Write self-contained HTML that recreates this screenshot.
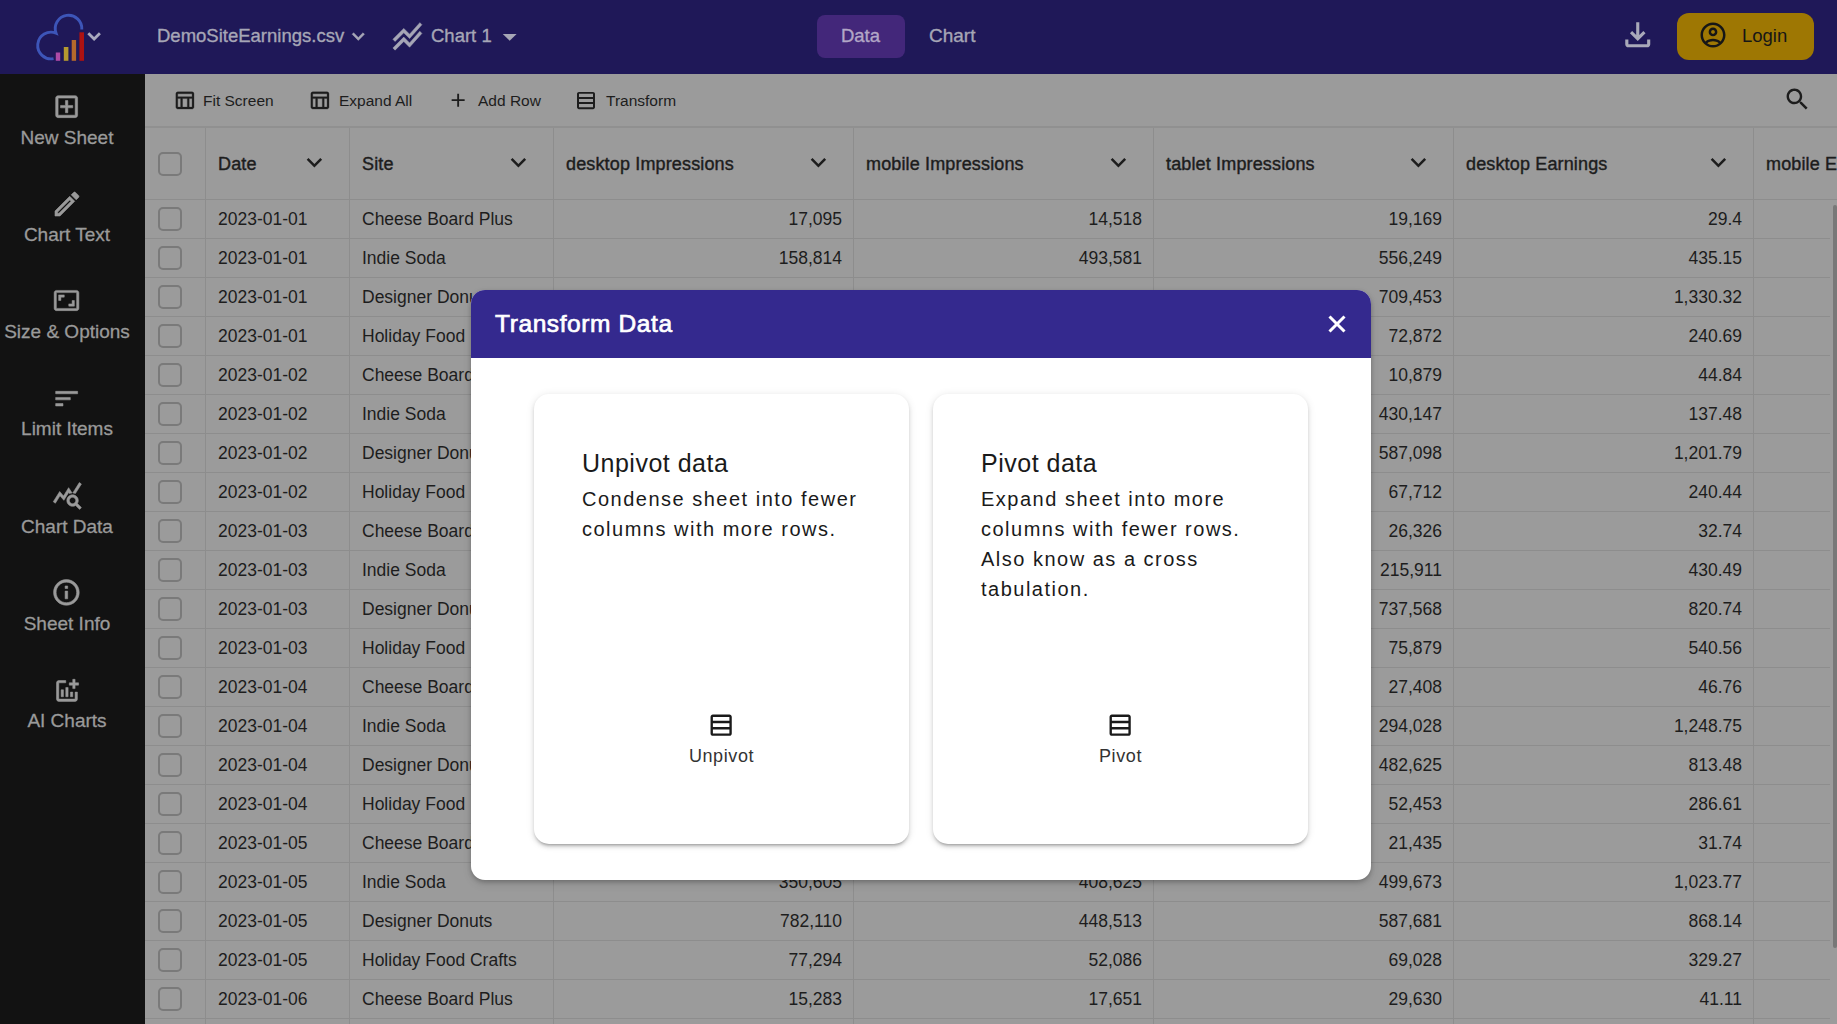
<!DOCTYPE html>
<html><head><meta charset="utf-8"><style>
*{box-sizing:border-box}
html,body{margin:0;padding:0}
body{width:1837px;height:1024px;overflow:hidden;position:relative;font-family:"Liberation Sans",sans-serif;background:#9b9b9b;color:#1d1d1d}
.a{position:absolute;white-space:nowrap}
.cell{position:absolute;font-size:17.5px;line-height:20px;white-space:nowrap;color:#1d1d1d}
.hd{position:absolute;font-size:18px;line-height:20px;white-space:nowrap;color:#1d1d1d;-webkit-text-stroke:0.4px #1d1d1d;letter-spacing:0.15px}
.side{position:absolute;left:0;width:134px;text-align:center;font-size:19px;line-height:20px;color:#9a9a9a;white-space:nowrap;-webkit-text-stroke:0.3px #9a9a9a}
.tb{position:absolute;font-size:15.5px;line-height:18px;color:#1d1d1d;white-space:nowrap}
</style></head><body>

<div class="a" style="left:0;top:0;width:1837px;height:74px;background:#1f1858"></div>
<svg class="a" style="left:30px;top:8px" width="80" height="60" viewBox="0 0 80 60">
<path d="M51.8 21.5 A13.3 13.3 0 1 0 26.06 25.2 A13.3 13.3 0 1 0 23.54 50.56" fill="none" stroke="#3d55b8" stroke-width="2.9"/>
<rect x="25.8" y="44.5" width="4.4" height="8.3" fill="#ad4aa6"/>
<rect x="33.8" y="39" width="4.6" height="13.8" fill="#b59a30"/>
<rect x="41.7" y="32" width="4.4" height="20.8" fill="#b4692c"/>
<rect x="49.4" y="24.3" width="4.6" height="28.5" fill="#ad1212"/>
<path d="M58.3 25.3 L64.1 31 L69.9 25.3" fill="none" stroke="#a9a9bf" stroke-width="2.8"/>
</svg>
<div class="a" style="left:157px;top:25px;font-size:18.5px;line-height:22px;color:#a6a6b6;-webkit-text-stroke:0.35px #a6a6b6">DemoSiteEarnings.csv</div>
<svg class="a" style="left:345.5px;top:23.8px;overflow:visible" width="24.6" height="24.6" viewBox="0 0 24 24"><path d="M16.59 8.59L12 13.17 7.41 8.59 6 10l6 6 6-6z" fill="#a6a6b6" stroke="#a6a6b6" stroke-width="0.5"/></svg>
<svg class="a" style="left:390.1px;top:19.4px;overflow:visible" width="34.8" height="34.8" viewBox="0 0 24 24"><path d="M2 19.99l7.5-7.51 4 4 7.09-7.97L22 9.92l-8.5 9.56-4-4-6 6.01-1.5-1.5zm1.5-4.5l6-6.01 4 4L22 3.92l-1.41-1.41-7.09 7.97-4-4L2 13.99l1.5 1.5z" fill="#a6a6b6" stroke="#a6a6b6" stroke-width="0.35"/></svg>
<div class="a" style="left:431px;top:25px;font-size:18.5px;line-height:22px;color:#a6a6b6;-webkit-text-stroke:0.35px #a6a6b6">Chart 1</div>
<svg class="a" style="left:493px;top:19.7px;overflow:visible" width="33.4" height="33.4" viewBox="0 0 24 24"><path d="M7 10l5 5 5-5z" fill="#a6a6b6"/></svg>
<div class="a" style="left:817px;top:15px;width:88px;height:43px;background:#43277a;border-radius:8px"></div>
<div class="a" style="left:816.5px;top:25px;width:88px;text-align:center;font-size:18.5px;line-height:22px;color:#b2a6c6;-webkit-text-stroke:0.35px #b2a6c6">Data</div>
<div class="a" style="left:929px;top:25px;font-size:19px;line-height:22px;color:#a6a6b6;-webkit-text-stroke:0.35px #a6a6b6">Chart</div>
<svg class="a" style="left:1618.75px;top:15.75px;overflow:visible" width="37.5" height="37.5" viewBox="0 0 24 24"><path d="M18 15v3H6v-3H4v3c0 1.1.9 2 2 2h12c1.1 0 2-.9 2-2v-3h-2zm-1-4l-1.41-1.41L13 12.17V4h-2v8.17L8.41 9.59 7 11l5 5 5-5z" fill="#a9a9b9"/></svg>
<div class="a" style="left:1677px;top:13px;width:137px;height:47px;background:#9e7703;border-radius:12px"></div>
<svg class="a" style="left:1697.5px;top:20.4px;overflow:visible" width="30" height="30" viewBox="0 0 24 24"><path d="M12 2C6.48 2 2 6.48 2 12s4.48 10 10 10 10-4.48 10-10S17.52 2 12 2zM7.35 18.5C8.66 17.56 10.26 17 12 17s3.34.56 4.65 1.5c-1.31.94-2.91 1.5-4.65 1.5s-3.34-.56-4.65-1.5zm10.79-1.38C16.45 15.8 14.32 15 12 15s-4.45.8-6.14 2.12C4.7 15.73 4 13.95 4 12c0-4.42 3.58-8 8-8s8 3.58 8 8c0 1.95-.7 3.73-1.86 5.12zM12 6c-1.93 0-3.5 1.57-3.5 3.5S10.07 13 12 13s3.5-1.57 3.5-3.5S13.93 6 12 6zm0 5c-.83 0-1.5-.67-1.5-1.5S11.17 8 12 8s1.5.67 1.5 1.5S12.83 11 12 11z" fill="#161616"/></svg>
<div class="a" style="left:1742px;top:25px;font-size:18.5px;line-height:22px;color:#161616">Login</div>
<div class="a" style="left:0;top:74px;width:145px;height:950px;background:#121212"></div>
<div class="side" style="top:128px">New Sheet</div>
<div class="side" style="top:225px">Chart Text</div>
<div class="side" style="top:322px">Size &amp; Options</div>
<div class="side" style="top:419px">Limit Items</div>
<div class="side" style="top:517px">Chart Data</div>
<div class="side" style="top:614px">Sheet Info</div>
<div class="side" style="top:711px">AI Charts</div>
<svg class="a" style="left:52.3px;top:92.1px;overflow:visible" width="29.3" height="29.3" viewBox="0 0 24 24"><path d="M19 3H5c-1.11 0-2 .9-2 2v14c0 1.1.89 2 2 2h14c1.1 0 2-.9 2-2V5c0-1.1-.9-2-2-2zm0 16H5V5h14v14zm-8-2h2v-4h4v-2h-4V7h-2v4H7v2h4z" fill="#9a9a9a" stroke="#9a9a9a" stroke-width="0.45"/></svg>
<svg class="a" style="left:51px;top:187.6px;overflow:visible" width="32" height="32" viewBox="0 0 24 24"><path d="M3 17.25V21h3.75L17.81 9.94l-3.75-3.75L3 17.25zM5.92 19H5v-.92l9.06-9.06.92.92L5.92 19zM20.71 5.63l-2.34-2.34c-.39-.39-1.02-.39-1.41 0l-1.83 1.83 3.75 3.75 1.83-1.83c.39-.39.39-1.02 0-1.41z" fill="#9a9a9a" stroke="#9a9a9a" stroke-width="0.45"/></svg>
<svg class="a" style="left:52.9px;top:287.4px;overflow:visible" width="27" height="27" viewBox="0 0 24 24"><path d="M19 12h-2v3h-3v2h5v-5zM7 9h3V7H5v5h2V9zm14-6H3c-1.1 0-2 .9-2 2v14c0 1.1.9 2 2 2h18c1.1 0 2-.9 2-2V5c0-1.1-.9-2-2-2zm0 16.01H3V4.99h18v14.02z" fill="#9a9a9a" stroke="#9a9a9a" stroke-width="0.45"/></svg>
<svg class="a" style="left:52.3px;top:383.7px;overflow:visible" width="29.3" height="29.3" viewBox="0 0 24 24"><path d="M3 18h6v-2H3v2zM3 6v2h18V6H3zm0 7h12v-2H3v2z" fill="#9a9a9a" stroke="#9a9a9a" stroke-width="0.45"/></svg>
<svg class="a" style="left:51.7px;top:480.4px;overflow:visible" width="30.7" height="30.7" viewBox="0 0 24 24"><path d="M19.88 18.47c.44-.7.7-1.51.7-2.39 0-2.49-2.01-4.5-4.5-4.5s-4.5 2.01-4.5 4.5 2.01 4.5 4.49 4.5c.88 0 1.7-.26 2.39-.7L21.58 23 23 21.58l-3.12-3.11zm-3.8.11c-1.38 0-2.5-1.12-2.5-2.5s1.12-2.5 2.5-2.5 2.5 1.12 2.5 2.5-1.12 2.5-2.5 2.5zm-.36-8.5c-.74.02-1.45.18-2.1.45l-.55-.83-3.8 6.18-3.01-3.52-3.63 5.81L1 17l5-8 3 3.5L13 6l2.72 4.08zm2.59.5c-.64-.28-1.33-.45-2.05-.49L21.38 2 23 3.18l-4.69 7.4z" fill="#9a9a9a" stroke="#9a9a9a" stroke-width="0.45"/></svg>
<svg class="a" style="left:51.4px;top:577.4px;overflow:visible" width="30.8" height="30.8" viewBox="0 0 24 24"><path d="M11 7h2v2h-2zm0 4h2v6h-2zm1-9C6.48 2 2 6.48 2 12s4.48 10 10 10 10-4.48 10-10S17.52 2 12 2zm0 18c-4.41 0-8-3.59-8-8s3.59-8 8-8 8 3.59 8 8-3.59 8-8 8z" fill="#9a9a9a" stroke="#9a9a9a" stroke-width="0.45"/></svg>
<svg class="a" style="left:52.5px;top:676.7px;overflow:visible" width="27.9" height="27.9" viewBox="0 0 24 24"><path d="M22 5v2h-3v3h-2V7h-3V5h3V2h2v3h3zm-3 14H5V5h6V3H5c-1.1 0-2 .9-2 2v14c0 1.1.9 2 2 2h14c1.1 0 2-.9 2-2v-6h-2v6zm-4-6v4h2v-4h-2zm-4 4h2V9h-2v8zm-2 0v-6H7v6h2z" fill="#9a9a9a" stroke="#9a9a9a" stroke-width="0.45"/></svg>
<div class="a" style="left:145px;top:126px;width:1692px;height:2px;background:#909090"></div>
<svg class="a" style="left:173.3px;top:88.6px;overflow:visible" width="22.9" height="22.9" viewBox="0 0 24 24"><path d="M20 3H5c-1.1 0-2 .9-2 2v14c0 1.1.9 2 2 2h15c1.1 0 2-.9 2-2V5c0-1.1-.9-2-2-2zm0 2v3H5V5h15zm-5 14h-5v-9h5v9zM5 10h3v9H5v-9zm12 9v-9h3v9h-3z" fill="#1d1d1d" stroke="#1d1d1d" stroke-width="0.3"/></svg>
<div class="tb" style="left:203px;top:92px">Fit Screen</div>
<svg class="a" style="left:308.1px;top:88.6px;overflow:visible" width="22.9" height="22.9" viewBox="0 0 24 24"><path d="M20 3H5c-1.1 0-2 .9-2 2v14c0 1.1.9 2 2 2h15c1.1 0 2-.9 2-2V5c0-1.1-.9-2-2-2zm0 2v3H5V5h15zm-5 14h-5v-9h5v9zM5 10h3v9H5v-9zm12 9v-9h3v9h-3z" fill="#1d1d1d" stroke="#1d1d1d" stroke-width="0.3"/></svg>
<div class="tb" style="left:339px;top:92px">Expand All</div>
<svg class="a" style="left:447.35px;top:89.35px;overflow:visible" width="22.3" height="22.3" viewBox="0 0 24 24"><path d="M19 13h-6v6h-2v-6H5v-2h6V5h2v6h6v2z" fill="#1d1d1d"/></svg>
<div class="tb" style="left:478px;top:92px">Add Row</div>
<svg class="a" style="left:574px;top:88.6px" width="24" height="23" viewBox="0 0 24 24" preserveAspectRatio="none"><path d="M19 3H5c-1.1 0-2 .9-2 2v14c0 1.1.9 2 2 2h14c1.1 0 2-.9 2-2V5c0-1.1-.9-2-2-2zm0 16H5v-3.33h14V19zm0-5.33H5v-3.34h14v3.34zM19 8.33H5V5h14v3.33z" fill="#1d1d1d"/></svg>
<div class="tb" style="left:606px;top:92px">Transform</div>
<svg class="a" style="left:1783.4px;top:85.4px;overflow:visible" width="28.8" height="28.8" viewBox="0 0 24 24"><path d="M15.5 14h-.79l-.28-.27C15.41 12.59 16 11.11 16 9.5 16 5.91 13.09 3 9.5 3S3 5.91 3 9.5 5.91 16 9.5 16c1.61 0 3.09-.59 4.23-1.57l.27.28v.79l5 4.99L20.49 19l-4.99-5zm-6 0C7.01 14 5 11.99 5 9.5S7.01 5 9.5 5 14 7.01 14 9.5 11.99 14 9.5 14z" fill="#1d1d1d"/></svg>
<div class="a" style="left:205px;top:128px;width:1px;height:896px;background:#8d8d8d"></div>
<div class="a" style="left:349px;top:128px;width:1px;height:896px;background:#8d8d8d"></div>
<div class="a" style="left:553px;top:128px;width:1px;height:896px;background:#8d8d8d"></div>
<div class="a" style="left:853px;top:128px;width:1px;height:896px;background:#8d8d8d"></div>
<div class="a" style="left:1153px;top:128px;width:1px;height:896px;background:#8d8d8d"></div>
<div class="a" style="left:1453px;top:128px;width:1px;height:896px;background:#8d8d8d"></div>
<div class="a" style="left:1753px;top:128px;width:1px;height:896px;background:#8d8d8d"></div>
<div class="a" style="left:145px;top:199px;width:1692px;height:1px;background:#8d8d8d"></div>
<div style="position:absolute;left:158px;top:152px;width:20px;height:20px;border:2px solid #7a7a7a;border-radius:5px;box-sizing:content-box"></div>
<div class="hd" style="left:218px;top:154px">Date</div>
<svg class="a" style="left:298.9px;top:147px;overflow:visible" width="30.8" height="30.8" viewBox="0 0 24 24"><path d="M16.59 8.59L12 13.17 7.41 8.59 6 10l6 6 6-6z" fill="#1d1d1d"/></svg>
<div class="hd" style="left:362px;top:154px">Site</div>
<svg class="a" style="left:502.9px;top:147px;overflow:visible" width="30.8" height="30.8" viewBox="0 0 24 24"><path d="M16.59 8.59L12 13.17 7.41 8.59 6 10l6 6 6-6z" fill="#1d1d1d"/></svg>
<div class="hd" style="left:566px;top:154px">desktop Impressions</div>
<svg class="a" style="left:802.9px;top:147px;overflow:visible" width="30.8" height="30.8" viewBox="0 0 24 24"><path d="M16.59 8.59L12 13.17 7.41 8.59 6 10l6 6 6-6z" fill="#1d1d1d"/></svg>
<div class="hd" style="left:866px;top:154px">mobile Impressions</div>
<svg class="a" style="left:1102.9px;top:147px;overflow:visible" width="30.8" height="30.8" viewBox="0 0 24 24"><path d="M16.59 8.59L12 13.17 7.41 8.59 6 10l6 6 6-6z" fill="#1d1d1d"/></svg>
<div class="hd" style="left:1166px;top:154px">tablet Impressions</div>
<svg class="a" style="left:1402.9px;top:147px;overflow:visible" width="30.8" height="30.8" viewBox="0 0 24 24"><path d="M16.59 8.59L12 13.17 7.41 8.59 6 10l6 6 6-6z" fill="#1d1d1d"/></svg>
<div class="hd" style="left:1466px;top:154px">desktop Earnings</div>
<svg class="a" style="left:1702.9px;top:147px;overflow:visible" width="30.8" height="30.8" viewBox="0 0 24 24"><path d="M16.59 8.59L12 13.17 7.41 8.59 6 10l6 6 6-6z" fill="#1d1d1d"/></svg>
<div class="hd" style="left:1766px;top:154px">mobile Earnings</div>
<div class="a" style="left:145px;top:238px;width:1685px;height:1px;background:#8d8d8d"></div>
<div style="position:absolute;left:158px;top:207px;width:20px;height:20px;border:2px solid #7a7a7a;border-radius:5px;box-sizing:content-box"></div>
<div class="cell" style="left:218px;top:209px">2023-01-01</div>
<div class="cell" style="left:362px;top:209px">Cheese Board Plus</div>
<div class="cell" style="left:453px;width:389px;text-align:right;top:209px">17,095</div>
<div class="cell" style="left:753px;width:389px;text-align:right;top:209px">14,518</div>
<div class="cell" style="left:1053px;width:389px;text-align:right;top:209px">19,169</div>
<div class="cell" style="left:1353px;width:389px;text-align:right;top:209px">29.4</div>
<div class="a" style="left:145px;top:277px;width:1685px;height:1px;background:#8d8d8d"></div>
<div style="position:absolute;left:158px;top:246px;width:20px;height:20px;border:2px solid #7a7a7a;border-radius:5px;box-sizing:content-box"></div>
<div class="cell" style="left:218px;top:248px">2023-01-01</div>
<div class="cell" style="left:362px;top:248px">Indie Soda</div>
<div class="cell" style="left:453px;width:389px;text-align:right;top:248px">158,814</div>
<div class="cell" style="left:753px;width:389px;text-align:right;top:248px">493,581</div>
<div class="cell" style="left:1053px;width:389px;text-align:right;top:248px">556,249</div>
<div class="cell" style="left:1353px;width:389px;text-align:right;top:248px">435.15</div>
<div class="a" style="left:145px;top:316px;width:1685px;height:1px;background:#8d8d8d"></div>
<div style="position:absolute;left:158px;top:285px;width:20px;height:20px;border:2px solid #7a7a7a;border-radius:5px;box-sizing:content-box"></div>
<div class="cell" style="left:218px;top:287px">2023-01-01</div>
<div class="cell" style="left:362px;top:287px">Designer Donuts</div>
<div class="cell" style="left:1053px;width:389px;text-align:right;top:287px">709,453</div>
<div class="cell" style="left:1353px;width:389px;text-align:right;top:287px">1,330.32</div>
<div class="a" style="left:145px;top:355px;width:1685px;height:1px;background:#8d8d8d"></div>
<div style="position:absolute;left:158px;top:324px;width:20px;height:20px;border:2px solid #7a7a7a;border-radius:5px;box-sizing:content-box"></div>
<div class="cell" style="left:218px;top:326px">2023-01-01</div>
<div class="cell" style="left:362px;top:326px">Holiday Food</div>
<div class="cell" style="left:1053px;width:389px;text-align:right;top:326px">72,872</div>
<div class="cell" style="left:1353px;width:389px;text-align:right;top:326px">240.69</div>
<div class="a" style="left:145px;top:394px;width:1685px;height:1px;background:#8d8d8d"></div>
<div style="position:absolute;left:158px;top:363px;width:20px;height:20px;border:2px solid #7a7a7a;border-radius:5px;box-sizing:content-box"></div>
<div class="cell" style="left:218px;top:365px">2023-01-02</div>
<div class="cell" style="left:362px;top:365px">Cheese Board Plus</div>
<div class="cell" style="left:1053px;width:389px;text-align:right;top:365px">10,879</div>
<div class="cell" style="left:1353px;width:389px;text-align:right;top:365px">44.84</div>
<div class="a" style="left:145px;top:433px;width:1685px;height:1px;background:#8d8d8d"></div>
<div style="position:absolute;left:158px;top:402px;width:20px;height:20px;border:2px solid #7a7a7a;border-radius:5px;box-sizing:content-box"></div>
<div class="cell" style="left:218px;top:404px">2023-01-02</div>
<div class="cell" style="left:362px;top:404px">Indie Soda</div>
<div class="cell" style="left:1053px;width:389px;text-align:right;top:404px">430,147</div>
<div class="cell" style="left:1353px;width:389px;text-align:right;top:404px">137.48</div>
<div class="a" style="left:145px;top:472px;width:1685px;height:1px;background:#8d8d8d"></div>
<div style="position:absolute;left:158px;top:441px;width:20px;height:20px;border:2px solid #7a7a7a;border-radius:5px;box-sizing:content-box"></div>
<div class="cell" style="left:218px;top:443px">2023-01-02</div>
<div class="cell" style="left:362px;top:443px">Designer Donuts</div>
<div class="cell" style="left:1053px;width:389px;text-align:right;top:443px">587,098</div>
<div class="cell" style="left:1353px;width:389px;text-align:right;top:443px">1,201.79</div>
<div class="a" style="left:145px;top:511px;width:1685px;height:1px;background:#8d8d8d"></div>
<div style="position:absolute;left:158px;top:480px;width:20px;height:20px;border:2px solid #7a7a7a;border-radius:5px;box-sizing:content-box"></div>
<div class="cell" style="left:218px;top:482px">2023-01-02</div>
<div class="cell" style="left:362px;top:482px">Holiday Food</div>
<div class="cell" style="left:1053px;width:389px;text-align:right;top:482px">67,712</div>
<div class="cell" style="left:1353px;width:389px;text-align:right;top:482px">240.44</div>
<div class="a" style="left:145px;top:550px;width:1685px;height:1px;background:#8d8d8d"></div>
<div style="position:absolute;left:158px;top:519px;width:20px;height:20px;border:2px solid #7a7a7a;border-radius:5px;box-sizing:content-box"></div>
<div class="cell" style="left:218px;top:521px">2023-01-03</div>
<div class="cell" style="left:362px;top:521px">Cheese Board Plus</div>
<div class="cell" style="left:1053px;width:389px;text-align:right;top:521px">26,326</div>
<div class="cell" style="left:1353px;width:389px;text-align:right;top:521px">32.74</div>
<div class="a" style="left:145px;top:589px;width:1685px;height:1px;background:#8d8d8d"></div>
<div style="position:absolute;left:158px;top:558px;width:20px;height:20px;border:2px solid #7a7a7a;border-radius:5px;box-sizing:content-box"></div>
<div class="cell" style="left:218px;top:560px">2023-01-03</div>
<div class="cell" style="left:362px;top:560px">Indie Soda</div>
<div class="cell" style="left:1053px;width:389px;text-align:right;top:560px">215,911</div>
<div class="cell" style="left:1353px;width:389px;text-align:right;top:560px">430.49</div>
<div class="a" style="left:145px;top:628px;width:1685px;height:1px;background:#8d8d8d"></div>
<div style="position:absolute;left:158px;top:597px;width:20px;height:20px;border:2px solid #7a7a7a;border-radius:5px;box-sizing:content-box"></div>
<div class="cell" style="left:218px;top:599px">2023-01-03</div>
<div class="cell" style="left:362px;top:599px">Designer Donuts</div>
<div class="cell" style="left:1053px;width:389px;text-align:right;top:599px">737,568</div>
<div class="cell" style="left:1353px;width:389px;text-align:right;top:599px">820.74</div>
<div class="a" style="left:145px;top:667px;width:1685px;height:1px;background:#8d8d8d"></div>
<div style="position:absolute;left:158px;top:636px;width:20px;height:20px;border:2px solid #7a7a7a;border-radius:5px;box-sizing:content-box"></div>
<div class="cell" style="left:218px;top:638px">2023-01-03</div>
<div class="cell" style="left:362px;top:638px">Holiday Food</div>
<div class="cell" style="left:1053px;width:389px;text-align:right;top:638px">75,879</div>
<div class="cell" style="left:1353px;width:389px;text-align:right;top:638px">540.56</div>
<div class="a" style="left:145px;top:706px;width:1685px;height:1px;background:#8d8d8d"></div>
<div style="position:absolute;left:158px;top:675px;width:20px;height:20px;border:2px solid #7a7a7a;border-radius:5px;box-sizing:content-box"></div>
<div class="cell" style="left:218px;top:677px">2023-01-04</div>
<div class="cell" style="left:362px;top:677px">Cheese Board Plus</div>
<div class="cell" style="left:1053px;width:389px;text-align:right;top:677px">27,408</div>
<div class="cell" style="left:1353px;width:389px;text-align:right;top:677px">46.76</div>
<div class="a" style="left:145px;top:745px;width:1685px;height:1px;background:#8d8d8d"></div>
<div style="position:absolute;left:158px;top:714px;width:20px;height:20px;border:2px solid #7a7a7a;border-radius:5px;box-sizing:content-box"></div>
<div class="cell" style="left:218px;top:716px">2023-01-04</div>
<div class="cell" style="left:362px;top:716px">Indie Soda</div>
<div class="cell" style="left:1053px;width:389px;text-align:right;top:716px">294,028</div>
<div class="cell" style="left:1353px;width:389px;text-align:right;top:716px">1,248.75</div>
<div class="a" style="left:145px;top:784px;width:1685px;height:1px;background:#8d8d8d"></div>
<div style="position:absolute;left:158px;top:753px;width:20px;height:20px;border:2px solid #7a7a7a;border-radius:5px;box-sizing:content-box"></div>
<div class="cell" style="left:218px;top:755px">2023-01-04</div>
<div class="cell" style="left:362px;top:755px">Designer Donuts</div>
<div class="cell" style="left:1053px;width:389px;text-align:right;top:755px">482,625</div>
<div class="cell" style="left:1353px;width:389px;text-align:right;top:755px">813.48</div>
<div class="a" style="left:145px;top:823px;width:1685px;height:1px;background:#8d8d8d"></div>
<div style="position:absolute;left:158px;top:792px;width:20px;height:20px;border:2px solid #7a7a7a;border-radius:5px;box-sizing:content-box"></div>
<div class="cell" style="left:218px;top:794px">2023-01-04</div>
<div class="cell" style="left:362px;top:794px">Holiday Food</div>
<div class="cell" style="left:1053px;width:389px;text-align:right;top:794px">52,453</div>
<div class="cell" style="left:1353px;width:389px;text-align:right;top:794px">286.61</div>
<div class="a" style="left:145px;top:862px;width:1685px;height:1px;background:#8d8d8d"></div>
<div style="position:absolute;left:158px;top:831px;width:20px;height:20px;border:2px solid #7a7a7a;border-radius:5px;box-sizing:content-box"></div>
<div class="cell" style="left:218px;top:833px">2023-01-05</div>
<div class="cell" style="left:362px;top:833px">Cheese Board Plus</div>
<div class="cell" style="left:1053px;width:389px;text-align:right;top:833px">21,435</div>
<div class="cell" style="left:1353px;width:389px;text-align:right;top:833px">31.74</div>
<div class="a" style="left:145px;top:901px;width:1685px;height:1px;background:#8d8d8d"></div>
<div style="position:absolute;left:158px;top:870px;width:20px;height:20px;border:2px solid #7a7a7a;border-radius:5px;box-sizing:content-box"></div>
<div class="cell" style="left:218px;top:872px">2023-01-05</div>
<div class="cell" style="left:362px;top:872px">Indie Soda</div>
<div class="cell" style="left:453px;width:389px;text-align:right;top:872px">350,605</div>
<div class="cell" style="left:753px;width:389px;text-align:right;top:872px">408,625</div>
<div class="cell" style="left:1053px;width:389px;text-align:right;top:872px">499,673</div>
<div class="cell" style="left:1353px;width:389px;text-align:right;top:872px">1,023.77</div>
<div class="a" style="left:145px;top:940px;width:1685px;height:1px;background:#8d8d8d"></div>
<div style="position:absolute;left:158px;top:909px;width:20px;height:20px;border:2px solid #7a7a7a;border-radius:5px;box-sizing:content-box"></div>
<div class="cell" style="left:218px;top:911px">2023-01-05</div>
<div class="cell" style="left:362px;top:911px">Designer Donuts</div>
<div class="cell" style="left:453px;width:389px;text-align:right;top:911px">782,110</div>
<div class="cell" style="left:753px;width:389px;text-align:right;top:911px">448,513</div>
<div class="cell" style="left:1053px;width:389px;text-align:right;top:911px">587,681</div>
<div class="cell" style="left:1353px;width:389px;text-align:right;top:911px">868.14</div>
<div class="a" style="left:145px;top:979px;width:1685px;height:1px;background:#8d8d8d"></div>
<div style="position:absolute;left:158px;top:948px;width:20px;height:20px;border:2px solid #7a7a7a;border-radius:5px;box-sizing:content-box"></div>
<div class="cell" style="left:218px;top:950px">2023-01-05</div>
<div class="cell" style="left:362px;top:950px">Holiday Food Crafts</div>
<div class="cell" style="left:453px;width:389px;text-align:right;top:950px">77,294</div>
<div class="cell" style="left:753px;width:389px;text-align:right;top:950px">52,086</div>
<div class="cell" style="left:1053px;width:389px;text-align:right;top:950px">69,028</div>
<div class="cell" style="left:1353px;width:389px;text-align:right;top:950px">329.27</div>
<div class="a" style="left:145px;top:1018px;width:1685px;height:1px;background:#8d8d8d"></div>
<div style="position:absolute;left:158px;top:987px;width:20px;height:20px;border:2px solid #7a7a7a;border-radius:5px;box-sizing:content-box"></div>
<div class="cell" style="left:218px;top:989px">2023-01-06</div>
<div class="cell" style="left:362px;top:989px">Cheese Board Plus</div>
<div class="cell" style="left:453px;width:389px;text-align:right;top:989px">15,283</div>
<div class="cell" style="left:753px;width:389px;text-align:right;top:989px">17,651</div>
<div class="cell" style="left:1053px;width:389px;text-align:right;top:989px">29,630</div>
<div class="cell" style="left:1353px;width:389px;text-align:right;top:989px">41.11</div>
<div class="a" style="left:145px;top:1057px;width:1685px;height:1px;background:#8d8d8d"></div>
<div style="position:absolute;left:158px;top:1026px;width:20px;height:20px;border:2px solid #7a7a7a;border-radius:5px;box-sizing:content-box"></div>
<div class="cell" style="left:218px;top:1028px">2023-01-06</div>
<div class="cell" style="left:362px;top:1028px">Indie Soda</div>
<div class="a" style="left:1833px;top:205px;width:4px;height:743px;background:#787878;border-radius:3px"></div>
<div class="a" style="left:471px;top:290px;width:900px;height:590px;background:#fff;border-radius:14px;overflow:hidden;box-shadow:0 2px 4px rgba(0,0,0,0.22), 0 4px 10px rgba(0,0,0,0.10)">
<div class="a" style="left:0;top:0;width:900px;height:68px;background:#34298e"></div>
<div class="a" style="left:24px;top:20px;font-size:24.5px;line-height:28px;color:#fff;-webkit-text-stroke:0.7px #fff;letter-spacing:0.6px">Transform Data</div>
<svg class="a" style="left:856px;top:24px" width="20" height="20" viewBox="0 0 20 20"><path d="M2.5 2.5 L17.5 17.5 M17.5 2.5 L2.5 17.5" stroke="#fff" stroke-width="3"/></svg>
</div>
<div class="a" style="left:534px;top:394px;width:375px;height:450px;background:#fff;border-radius:15px;box-shadow:0 3px 3px -2px rgba(0,0,0,0.28), 0 3px 4px 0 rgba(0,0,0,0.12), 0 1px 8px 0 rgba(0,0,0,0.10)"><div class="a" style="left:48px;top:54px;font-size:25px;line-height:30px;letter-spacing:0.5px;color:#1a1a1a">Unpivot data</div><div class="a" style="left:48px;top:90px;font-size:20px;line-height:30px;letter-spacing:1.5px;color:#1a1a1a">Condense sheet into fewer</div><div class="a" style="left:48px;top:120px;font-size:20px;line-height:30px;letter-spacing:1.5px;color:#1a1a1a">columns with more rows.</div><svg class="a" style="left:172.9px;top:316.5px;overflow:visible" width="28.3" height="28.3" viewBox="0 0 24 24"><path d="M19 3H5c-1.1 0-2 .9-2 2v14c0 1.1.9 2 2 2h14c1.1 0 2-.9 2-2V5c0-1.1-.9-2-2-2zm0 16H5v-3.33h14V19zm0-5.33H5v-3.34h14v3.34zM19 8.33H5V5h14v3.33z" fill="#1a1a1a"/></svg><div class="a" style="left:0;width:375px;text-align:center;top:351px;font-size:18px;line-height:22px;letter-spacing:0.6px;color:#333">Unpivot</div></div>
<div class="a" style="left:933px;top:394px;width:375px;height:450px;background:#fff;border-radius:15px;box-shadow:0 3px 3px -2px rgba(0,0,0,0.28), 0 3px 4px 0 rgba(0,0,0,0.12), 0 1px 8px 0 rgba(0,0,0,0.10)"><div class="a" style="left:48px;top:54px;font-size:25px;line-height:30px;letter-spacing:0.5px;color:#1a1a1a">Pivot data</div><div class="a" style="left:48px;top:90px;font-size:20px;line-height:30px;letter-spacing:1.5px;color:#1a1a1a">Expand sheet into more</div><div class="a" style="left:48px;top:120px;font-size:20px;line-height:30px;letter-spacing:1.5px;color:#1a1a1a">columns with fewer rows.</div><div class="a" style="left:48px;top:150px;font-size:20px;line-height:30px;letter-spacing:1.5px;color:#1a1a1a">Also know as a cross</div><div class="a" style="left:48px;top:180px;font-size:20px;line-height:30px;letter-spacing:1.5px;color:#1a1a1a">tabulation.</div><svg class="a" style="left:172.9px;top:316.5px;overflow:visible" width="28.3" height="28.3" viewBox="0 0 24 24"><path d="M19 3H5c-1.1 0-2 .9-2 2v14c0 1.1.9 2 2 2h14c1.1 0 2-.9 2-2V5c0-1.1-.9-2-2-2zm0 16H5v-3.33h14V19zm0-5.33H5v-3.34h14v3.34zM19 8.33H5V5h14v3.33z" fill="#1a1a1a"/></svg><div class="a" style="left:0;width:375px;text-align:center;top:351px;font-size:18px;line-height:22px;letter-spacing:0.6px;color:#333">Pivot</div></div>
</body></html>
